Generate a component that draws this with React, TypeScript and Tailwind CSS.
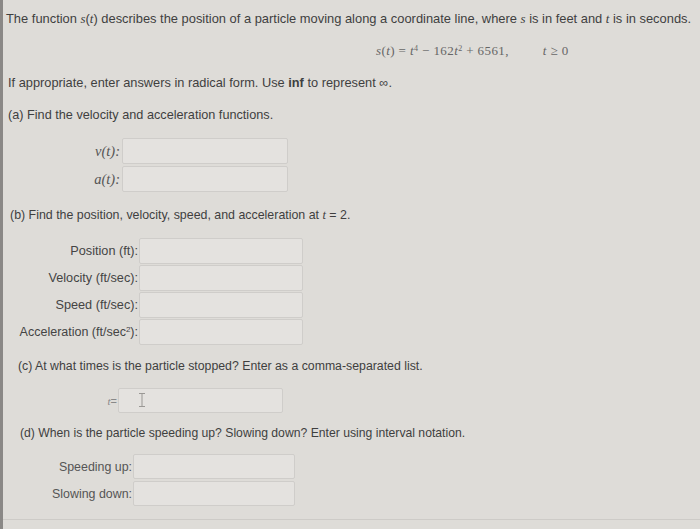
import React from 'react';

const M = ({ children }: { children: React.ReactNode }) => (
  <span className="font-['Liberation_Serif',serif] italic">{children}</span>
);

function Box({ w = 'w-[166px]', h = 'h-[26px]', children }: { w?: string; h?: string; children?: React.ReactNode }) {
  return (
    <div className={`${w} ${h} relative rounded-[2px] border border-[#cfcdca] bg-[#e4e2df]`}>
      {children}
    </div>
  );
}

export default function App() {
  return (
    <div className="w-[700px] h-[529px] bg-[#dedcd8] border-l-[3px] border-[#8a8886] font-['Liberation_Sans',Arial,sans-serif] text-[#3f3f3f] leading-[18px] overflow-hidden">
      <div className="h-[520px] border-b border-[#cdcbc7]">
        <p className="pt-[10px] pl-[3px] whitespace-nowrap text-[12.9px]">
          The function <M>s</M>(<M>t</M>) describes the position of a particle moving along a coordinate line, where <M>s</M> is in feet and <M>t</M> is in seconds.
        </p>
        <div className="mt-[14px] pl-[373px] flex text-[13px] text-[#666] font-['Liberation_Serif',serif] tracking-[0.4px]">
          <span><i>s</i>(<i>t</i>) = <i>t</i><sup className="text-[8px]">4</sup> − 162<i>t</i><sup className="text-[8px]">2</sup> + 6561,</span>
          <span className="ml-[34px]"><i>t</i> ≥ 0</span>
        </div>
        <p className="mt-[14px] pl-[5px] text-[12.8px]">
          If appropriate, enter answers in radical form. Use <b>inf</b> to represent ∞.
        </p>
        <p className="mt-[14px] pl-[5px] text-[12.7px]">(a) Find the velocity and acceleration functions.</p>

        <div className="mt-[14px] pl-[82px] flex flex-col gap-[2px] text-[14.5px] text-[#555] font-['Liberation_Serif',serif] italic">
          <div className="flex items-center">
            <div className="w-[37px] text-right pr-[2px]">v(t):</div>
            <Box />
          </div>
          <div className="flex items-center">
            <div className="w-[37px] text-right pr-[2px]">a(t):</div>
            <Box />
          </div>
        </div>

        <p className="mt-[14px] pl-[7px] text-[12.4px]">
          (b) Find the position, velocity, speed, and acceleration at <M>t</M> = 2.
        </p>

        <div className="mt-[14px] pl-[11px] flex flex-col gap-[1px] text-[12.7px] text-[#444]">
          <div className="flex items-center">
            <div className="w-[125px] text-right pr-[1px] whitespace-nowrap">Position (ft):</div>
            <Box w="w-[164px]" />
          </div>
          <div className="flex items-center">
            <div className="w-[125px] text-right pr-[1px] whitespace-nowrap">Velocity (ft/sec):</div>
            <Box w="w-[164px]" />
          </div>
          <div className="flex items-center">
            <div className="w-[125px] text-right pr-[1px] whitespace-nowrap">Speed (ft/sec):</div>
            <Box w="w-[164px]" />
          </div>
          <div className="flex items-center">
            <div className="w-[125px] text-right pr-[1px] whitespace-nowrap text-[12.5px]">
              Acceleration (ft/sec<sup className="text-[8px]">2</sup>):
            </div>
            <Box w="w-[164px]" />
          </div>
        </div>

        <p className="mt-[12px] pl-[15px] text-[12.3px]">(c) At what times is the particle stopped? Enter as a comma-separated list.</p>

        <div className="mt-[13px] pl-[100px] flex items-center text-[11px] text-[#888]">
          <div className="w-[15px] text-right pr-[1px]"><M>t</M>=</div>
          <Box w="w-[165px]" h="h-[25px]">
            <svg className="absolute left-[19px] top-[3px]" width="8" height="16" viewBox="0 0 8 16" fill="none" stroke="#9a9895" strokeWidth="1">
              <path d="M1 1.5h6M1 14.5h6M4 1.5v13" />
            </svg>
          </Box>
        </div>

        <p className="mt-[11px] pl-[17px] text-[12.2px]">(d) When is the particle speeding up? Slowing down? Enter using interval notation.</p>

        <div className="mt-[12px] pl-[40px] flex flex-col gap-[2px] text-[12.4px] text-[#555]">
          <div className="flex items-center">
            <div className="w-[90px] text-right pr-[1px] whitespace-nowrap">Speeding up:</div>
            <Box w="w-[162px]" h="h-[25px]" />
          </div>
          <div className="flex items-center">
            <div className="w-[90px] text-right pr-[1px] whitespace-nowrap">Slowing down:</div>
            <Box w="w-[162px]" h="h-[25px]" />
          </div>
        </div>
      </div>
    </div>
  );
}
